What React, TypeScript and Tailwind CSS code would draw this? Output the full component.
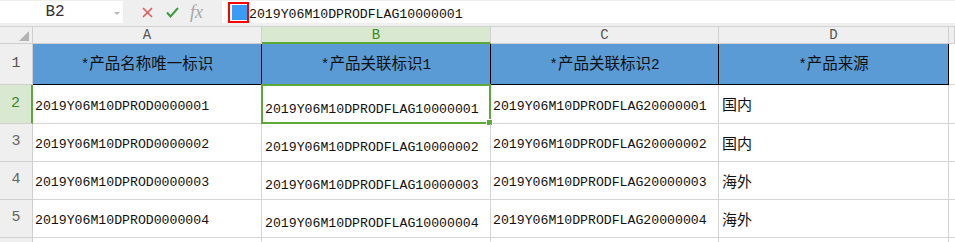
import React from "react";

const MONO = "font-['Liberation_Mono',monospace]";
const CJK = "font-['Noto_Sans_CJK_SC','Noto_Sans',sans-serif]";

function Mixed({ text, ascii = "text-[13.2px]", cjk = "text-[15px]" }: { text: string; ascii?: string; cjk?: string }) {
  const parts: { s: string; c: boolean }[] = [];
  for (const ch of text) {
    const c = /[\u3000-\u9fff]/.test(ch);
    const last = parts[parts.length - 1];
    if (last && last.c === c) last.s += ch;
    else parts.push({ s: ch, c });
  }
  return (
    <span className="whitespace-nowrap">
      {parts.map((p, i) =>
        p.c ? (
          <span key={i} className={`${CJK} ${cjk}`}>{p.s}</span>
        ) : (
          <span key={i} className={`${MONO} ${ascii}`}>{p.s}</span>
        )
      )}
    </span>
  );
}

const rows = [
  ["2019Y06M10DPROD0000001", "2019Y06M10DPRODFLAG10000001", "2019Y06M10DPRODFLAG20000001", "国内"],
  ["2019Y06M10DPROD0000002", "2019Y06M10DPRODFLAG10000002", "2019Y06M10DPRODFLAG20000002", "国内"],
  ["2019Y06M10DPROD0000003", "2019Y06M10DPRODFLAG10000003", "2019Y06M10DPRODFLAG20000003", "海外"],
  ["2019Y06M10DPROD0000004", "2019Y06M10DPRODFLAG10000004", "2019Y06M10DPRODFLAG20000004", "海外"],
];

const headers = ["*产品名称唯一标识", "*产品关联标识1", "*产品关联标识2", "*产品来源"];
const cols = ["A", "B", "C", "D", ""];

export default function App() {
  return (
    <div className="w-[955px] h-[242px] overflow-hidden bg-white relative text-[#111]">
      {/* Top bar */}
      <div className="flex h-[27px] bg-[#efefef] border-b border-[#d2d2d2] pt-[1px]">
        <div className="relative w-[123px] h-[22px] bg-white flex items-center">
          <span className={`${MONO} text-[16px] text-[#333] w-[110px] text-center`}>B2</span>
          <svg className="absolute left-[114px] top-[11px]" width="6" height="4" viewBox="0 0 6 4">
            <path d="M0 0 L6 0 L3 3 Z" fill="#b8b8b8" />
          </svg>
        </div>
        <div className="w-[99px] h-[22px] flex items-center">
          <svg className="ml-[19px]" width="11" height="11" viewBox="0 0 11 11">
            <path d="M1 1 L10 10 M10 1 L1 10" stroke="#e05a5a" strokeWidth="1.6" />
          </svg>
          <svg className="ml-[13px]" width="13" height="11" viewBox="0 0 13 11">
            <path d="M1 5.5 L4.5 9.5 L12 1" stroke="#3f9a3f" strokeWidth="2" fill="none" />
          </svg>
          <span className="ml-[11px] font-['Liberation_Serif',serif] italic text-[18px] text-[#a6a6a6] leading-none">fx</span>
        </div>
        <div className="flex-1 h-[22px] bg-white flex items-center">
          <div className="ml-[6px] w-[21px] h-[21px] border-2 border-[#ff0000] bg-white pl-[2px] py-[1px] box-border">
            <div className="w-full h-full bg-[#3b9cf5]" />
          </div>
          <Mixed text="2019Y06M10DPRODFLAG10000001" />
        </div>
      </div>

      {/* Grid */}
      <div className="grid grid-cols-[33px_229px_229px_228px_230px_1fr] grid-rows-[17px_41px_39px_38px_38px_38px_20px]">
        {/* column header row */}
        <div className="relative bg-[#efefef] border-r border-b border-[#cfcfcf]">
          <svg className="absolute right-[3px] bottom-[2px]" width="10" height="10" viewBox="0 0 10 10">
            <path d="M10 0 L10 10 L0 10 Z" fill="#b4b4b4" />
          </svg>
        </div>
        {cols.map((c, i) =>
          i === 1 ? (
            <div key={i} className="bg-[#d9e8d1] border-r border-[#cfcfcf] border-b-2 border-b-[#5ea83a] flex items-center justify-center">
              <span className={`${MONO} text-[14px] text-[#3d8a22] leading-none`}>{c}</span>
            </div>
          ) : (
            <div key={i} className="bg-[#efefef] border-r border-b border-[#cfcfcf] flex items-center justify-center">
              <span className={`${MONO} text-[14px] text-[#555] leading-none`}>{c}</span>
            </div>
          )
        )}

        {/* header row 1 */}
        <div className="bg-[#efefef] border-r border-b border-[#cfcfcf] flex items-center justify-center">
          <span className={`${MONO} text-[15px] text-[#555]`}>1</span>
        </div>
        {headers.map((h, i) => (
          <div key={i} className="bg-[#5b9bd5] border-r border-b border-black flex items-center justify-center">
            <Mixed text={h} ascii="text-[14.5px]" cjk="text-[15.5px]" />
          </div>
        ))}
        <div className="bg-white border-b border-[#d4d4d4]" />

        {/* data rows */}
        {rows.map((r, ri) => (
          <React.Fragment key={ri}>
            {ri === 0 ? (
              <div className="bg-[#d9e8d1] border-b border-[#cfcfcf] border-r-2 border-r-[#5ea83a] flex items-center justify-center">
                <span className={`${MONO} text-[15px] text-[#3d8a22]`}>{ri + 2}</span>
              </div>
            ) : (
              <div className="bg-[#efefef] border-r border-b border-[#cfcfcf] flex items-center justify-center">
                <span className={`${MONO} text-[15px] text-[#666]`}>{ri + 2}</span>
              </div>
            )}
            <div className="border-r border-b border-[#d4d4d4] flex items-center pl-[2px] overflow-hidden">
              <Mixed text={r[0]} />
            </div>
            <div className="relative border-r border-b border-[#d4d4d4] flex items-end pl-[3px] pb-[3px]">
              <Mixed text={r[1]} />
              {ri === 0 && (
                <>
                  <div className="absolute -top-[1px] -left-[1px] -right-[1px] -bottom-[1px] border-2 border-[#5ea83a]" />
                  <div className="absolute -right-[3px] -bottom-[3px] w-[5px] h-[5px] bg-[#5ea83a] border border-white box-content" />
                </>
              )}
            </div>
            <div className="border-r border-b border-[#d4d4d4] flex items-center pl-[2px] overflow-hidden">
              <Mixed text={r[2]} />
            </div>
            <div className="border-r border-b border-[#d4d4d4] flex items-center pl-[3px]">
              <Mixed text={r[3]} />
            </div>
            <div className="border-b border-[#d4d4d4]" />
          </React.Fragment>
        ))}

        {/* partial row 6 */}
        <div className="bg-[#efefef] border-r border-[#cfcfcf]" />
        <div className="border-r border-[#d4d4d4]" />
        <div className="border-r border-[#d4d4d4]" />
        <div className="border-r border-[#d4d4d4]" />
        <div className="border-r border-[#d4d4d4]" />
        <div />
      </div>
    </div>
  );
}
